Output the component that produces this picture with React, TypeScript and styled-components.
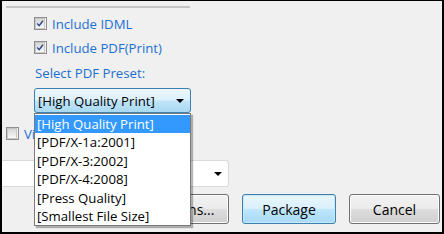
import React from "react";
import styled, { createGlobalStyle } from "styled-components";

const GlobalStyle = createGlobalStyle`
    html, body {
        margin: 0;
        padding: 0;
        background: #f0f0f0;
    }
    * {
        box-sizing: border-box;
    }
`;

const Frame = styled.div`
    position: relative;
    width: 444px;
    height: 234px;
    border: 2px solid #000;
    border-top-width: 1px;
    background: #f0f0f0;
    overflow: hidden;
    font-family: "Open Sans", "Noto Sans", sans-serif;
    font-size: 13.2px;
`;

const Separator = styled.div`
    margin: 5px 0 0 4px;
    width: 184px;
    height: 2px;
    background: #c4c4c4;
`;

const Group = styled.div`
    margin-top: 9px;
    padding-left: 32px;
`;

const CheckRow = styled.label<{ $gap?: number }>`
    display: flex;
    align-items: center;
    height: 13px;
    margin-top: ${(p) => p.$gap ?? 0}px;
    gap: 5px;
    color: #1b6fd1;
    white-space: nowrap;
`;

const Box = styled.span`
    flex: none;
    width: 13px;
    height: 13px;
    border: 1px solid #8f8f8f;
    background: #f4f4f4;
    padding: 1px;
    display: flex;
    svg {
        display: block;
        width: 9px;
        height: 9px;
        background: linear-gradient(#d6d6d6, #f9f9f9);
        border: 1px solid #c6c6c6;
        box-sizing: content-box;
        margin: -1px 0 0 -1px;
    }
`;

const Label = styled.div`
    margin-top: 11px;
    height: 16px;
    line-height: 16px;
    padding-left: 1px;
    color: #1b6fd1;
`;

const SelectWrap = styled.div`
    position: relative;
    margin-top: 7px;
    width: 157px;
`;

const SelectBox = styled.div`
    display: flex;
    align-items: center;
    justify-content: space-between;
    height: 25px;
    padding: 0 6px 0 3px;
    border: 1px solid #3c7fb1;
    border-radius: 3px;
    background: linear-gradient(#ecf7fd 0%, #dcf0fc 48%, #bfe4f8 52%, #a9d9f3 100%);
    color: #000;
    white-space: nowrap;
`;

const Arrow = styled.span`
    flex: none;
    width: 0;
    height: 0;
    border-left: 4px solid transparent;
    border-right: 4px solid transparent;
    border-top: 4px solid #000;
`;

const List = styled.ul`
    position: absolute;
    top: 100%;
    left: 0;
    width: 157px;
    margin: 0;
    padding: 1px 0 0;
    list-style: none;
    background: #fff;
    border: 1px solid #7a7a7a;
    box-shadow: 2px 2px 1px rgba(0, 0, 0, 0.28);
    z-index: 2;
`;

const Item = styled.li<{ $active?: boolean }>`
    height: 18.4px;
    line-height: 18.4px;
    padding-left: 2px;
    white-space: nowrap;
    color: ${(p) => (p.$active ? "#fff" : "#000")};
    background: ${(p) => (p.$active ? "#3399ff" : "transparent")};
`;

const ViewRow = styled(CheckRow)`
    margin-top: 14px;
    padding-left: 4px;
`;

const Combo = styled.div`
    display: flex;
    align-items: center;
    justify-content: flex-end;
    margin-top: 20px;
    width: 227px;
    height: 27px;
    padding-right: 6px;
    background: #fff;
    border: 1px solid #d9d9d9;
    border-left: none;
    border-radius: 0 3px 3px 0;
`;

const ButtonRow = styled.div`
    display: flex;
    justify-content: flex-end;
    gap: 13px;
    margin-top: 7px;
    padding-right: 2px;
`;

const Button = styled.button<{ $primary?: boolean; $w: number }>`
    width: ${(p) => p.$w}px;
    height: 30px;
    padding: 0;
    font: inherit;
    font-size: 14px;
    color: #000;
    border-radius: 3px;
    border: 1px solid ${(p) => (p.$primary ? "#3c7fb1" : "#707070")};
    box-shadow: inset 0 0 0 1px ${(p) => (p.$primary ? "#cbe9f9" : "#fbfbfb")};
    background: ${(p) =>
        p.$primary
            ? "linear-gradient(#eaf6fd 0%, #d9f0fc 48%, #bee6fd 52%, #a7d9f5 100%)"
            : "linear-gradient(#f2f2f2 0%, #ebebeb 48%, #dddddd 52%, #cfcfcf 100%)"};
`;

function Checkbox({ checked }: { checked?: boolean }) {
    return (
        <Box>
            <svg viewBox="0 0 9 9">
                {checked && (
                    <path
                        d="M1.3 4.4 L3.6 7 L7.8 1.4"
                        fill="none"
                        stroke="#2a4b8a"
                        strokeWidth="1.6"
                    />
                )}
            </svg>
        </Box>
    );
}

const presets = [
    "[High Quality Print]",
    "[PDF/X-1a:2001]",
    "[PDF/X-3:2002]",
    "[PDF/X-4:2008]",
    "[Press Quality]",
    "[Smallest File Size]",
];

export default function App() {
    return (
        <>
            <GlobalStyle />
            <Frame>
                <Separator />
                <Group>
                    <CheckRow>
                        <Checkbox checked />
                        Include IDML
                    </CheckRow>
                    <CheckRow $gap={11}>
                        <Checkbox checked />
                        Include PDF(Print)
                    </CheckRow>
                    <Label>Select PDF Preset:</Label>
                    <SelectWrap>
                        <SelectBox>
                            {presets[0]}
                            <Arrow />
                        </SelectBox>
                        <List>
                            {presets.map((p, i) => (
                                <Item key={p} $active={i === 0}>
                                    {p}
                                </Item>
                            ))}
                        </List>
                    </SelectWrap>
                </Group>
                <ViewRow>
                    <Checkbox />
                    View Report
                </ViewRow>
                <Combo>
                    <Arrow />
                </Combo>
                <ButtonRow>
                    <Button $w={92}>Options...</Button>
                    <Button $w={94} $primary>
                        Package
                    </Button>
                    <Button $w={91}>Cancel</Button>
                </ButtonRow>
            </Frame>
        </>
    );
}
